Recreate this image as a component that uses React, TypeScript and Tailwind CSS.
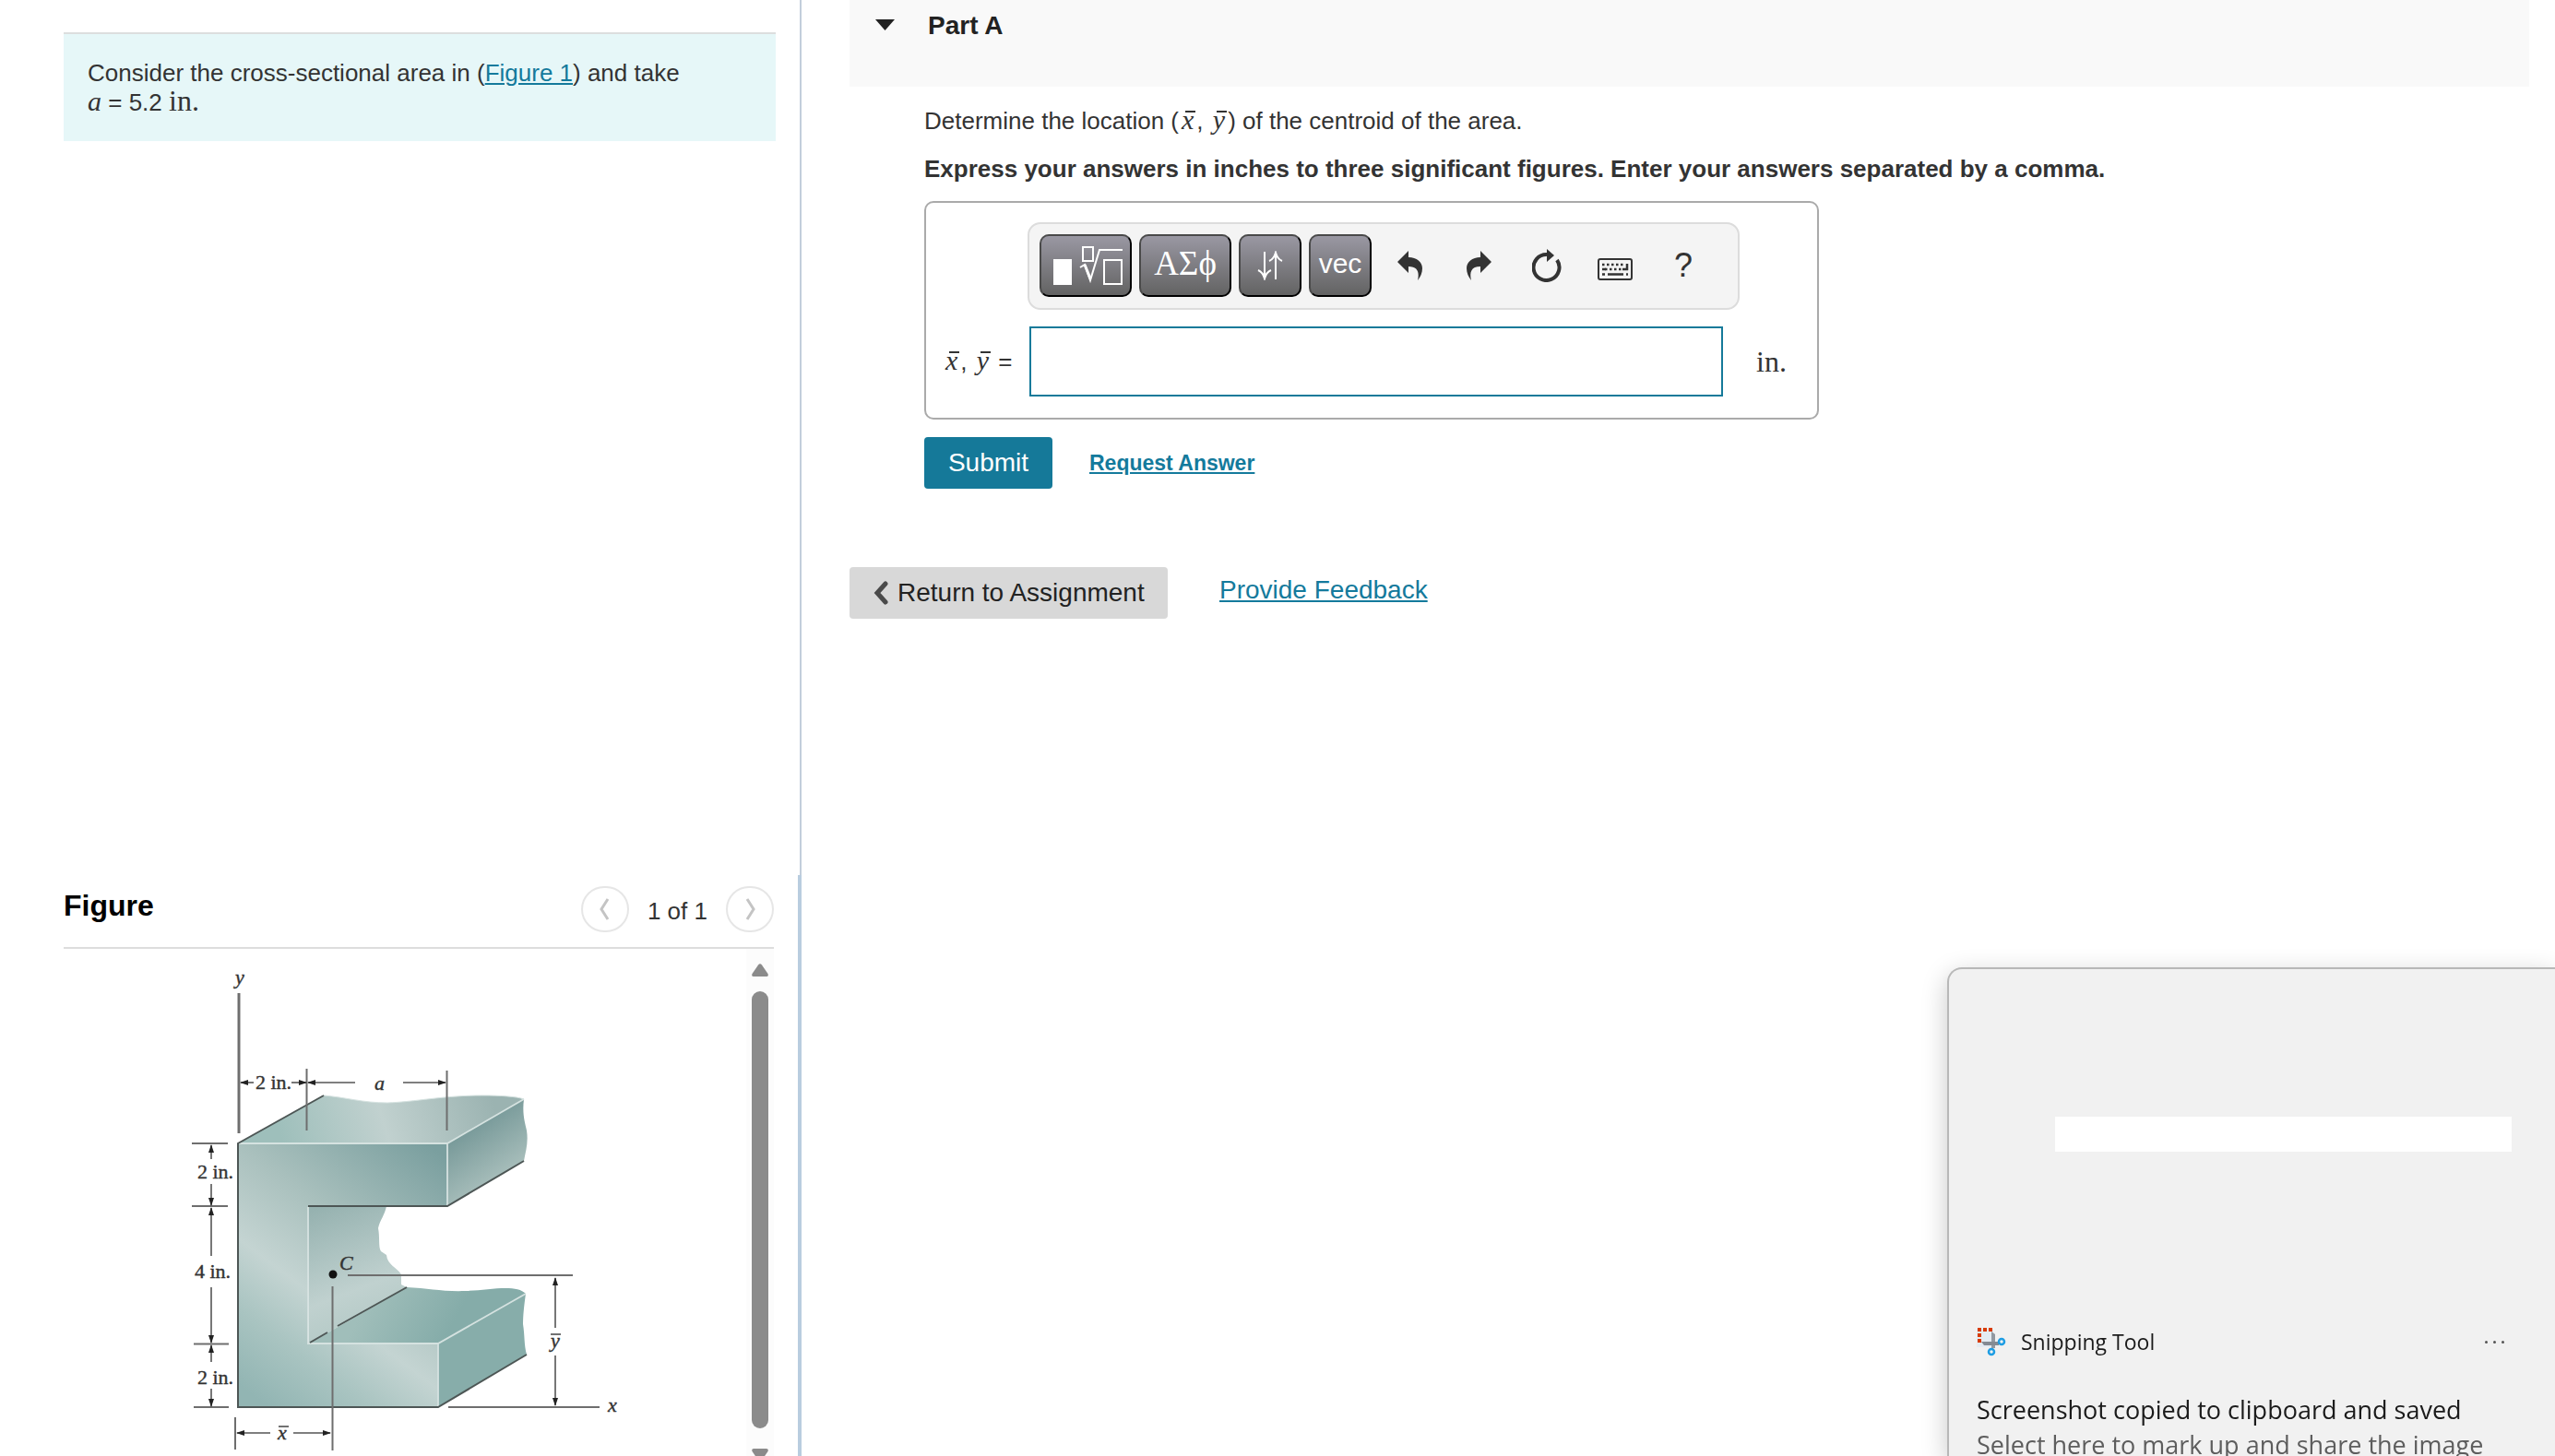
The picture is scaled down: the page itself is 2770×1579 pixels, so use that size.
import type { ReactNode } from 'react';

const sans = "font-['Liberation_Sans',Arial,sans-serif]";
const serif = "font-['Liberation_Serif','Times_New_Roman',serif]";

type MathProps = { children: ReactNode; bar?: boolean };

function MathVar({ children, bar }: MathProps) {
  return (
    <i className={`${serif} relative text-[30px] leading-5 ${bar ? 'px-[3px]' : ''}`}>
      {children}
      {bar && (
        <span
          aria-hidden="true"
          className="absolute left-[7px] top-[7px] h-[2px] w-[11px] bg-[#333]"
        />
      )}
    </i>
  );
}

type ArrowLineProps = {
  x1: number;
  y1: number;
  x2: number;
  y2: number;
};

// Dimension line with its arrow head on the second point
function ArrowLine(props: ArrowLineProps) {
  return (
    <line {...props} stroke="#555" strokeWidth="1.6" markerEnd="url(#head)" />
  );
}

function CrossSection() {
  return (
    <svg
      viewBox="0 -1 490 549"
      role="img"
      aria-label="C-shaped cross section with its centroid C"
      className="ml-[111px] h-[549px] w-[490px] shrink-0"
    >
      <defs>
        <marker
          id="head"
          markerUnits="userSpaceOnUse"
          markerWidth="9"
          markerHeight="8"
          refX="8"
          refY="4"
          orient="auto"
        >
          <path d="M0 1 L9 4 L0 7 Z" fill="#222" />
        </marker>
        <linearGradient id="front" gradientUnits="userSpaceOnUse" x1="290" y1="215" x2="90" y2="480">
          <stop offset="0" stopColor="#7a9f9f" />
          <stop offset="0.37" stopColor="#a9c0bd" />
          <stop offset="0.62" stopColor="#c4d4d2" />
          <stop offset="0.8" stopColor="#a9c4c1" />
          <stop offset="1" stopColor="#92b5b3" />
        </linearGradient>
        <linearGradient id="top" gradientUnits="userSpaceOnUse" x1="130" y1="220" x2="350" y2="150">
          <stop offset="0" stopColor="#9ebfbb" />
          <stop offset="0.48" stopColor="#c1d1cf" />
          <stop offset="1" stopColor="#9bb3b1" />
        </linearGradient>
        <linearGradient id="side" gradientUnits="userSpaceOnUse" x1="330" y1="185" x2="370" y2="245">
          <stop offset="0" stopColor="#739696" />
          <stop offset="1" stopColor="#a9bfbc" />
        </linearGradient>
        <linearGradient id="inner" gradientUnits="userSpaceOnUse" x1="165" y1="280" x2="215" y2="410">
          <stop offset="0" stopColor="#96b2b0" />
          <stop offset="0.7" stopColor="#c0d1cf" />
          <stop offset="1" stopColor="#b5cac7" />
        </linearGradient>
        <linearGradient id="shelf" gradientUnits="userSpaceOnUse" x1="220" y1="380" x2="300" y2="425">
          <stop offset="0" stopColor="#a0beba" />
          <stop offset="1" stopColor="#85aca9" />
        </linearGradient>
      </defs>

      <path d="M154 278 H239 C237 288 232 293 230 302 C232 312 230 322 233 327 L239 331 C240 342 250 344 255 352 L255 363 L261 366 L155 427 Z" fill="url(#inner)" />
      <path d="M78 210 L171 158 C195 160 213 166 240 166 C270 165 300 158 343 158 C362 158 380 159 388 162 L305 210 Z" fill="url(#top)" />
      <path d="M305 210 L388 162 C386 178 389 187 391 196 C393 209 390 218 388 229 L305 278 Z" fill="url(#side)" />
      <path d="M155 427 L261 366 C285 367 300 371 325 370 C350 369 380 362 390 373 L295 427 Z" fill="url(#shelf)" />
      <path d="M295 427 L390 373 C388 387 387 397 387 406 C389 418 388 428 391 439 L295 496 Z" fill="#87adaa" />
      <path d="M78 210 H305 V278 H154 V427 H295 V496 H78 Z" fill="url(#front)" />

      <g fill="none" stroke="#d5e2e0" strokeWidth="1.8">
        <path d="M79 210 H305 L388 162 M305 210 V277" />
        <path d="M154 279 V427 H295 L390 373 M295 427 V495" />
        <path d="M171 158 C195 160 213 166 240 166 C270 165 300 158 343 158 C362 158 380 159 388 162" strokeWidth="1" />
      </g>
      <g fill="none" stroke="#4d5655" strokeWidth="2">
        <path d="M171 158 L78 210 V496 H295 L391 439" />
        <path d="M154 278 H305 L388 229" />
        <path d="M156 426 L175 415 M186 408 L261 366" />
      </g>

      <g stroke="#6e6e6e" strokeWidth="2">
        <path d="M79 47 V199" strokeWidth="3" />
        <path d="M152.500 129 V196 M304.500 131 V196" />
        <path d="M28 210 H67 M28 278 H67 M30 427.500 H68 M30 496 H68" />
        <path d="M197 353 H441 M306 496 H470" />
        <path d="M180.500 365 V543 M75 507 V542" />
      </g>

      <ArrowLine x1={95} y1={144} x2={81} y2={144} />
      <ArrowLine x1={136} y1={144} x2={152} y2={144} />
      <ArrowLine x1={205} y1={144} x2={154} y2={144} />
      <ArrowLine x1={257} y1={144} x2={303} y2={144} />
      <ArrowLine x1={49} y1={227} x2={49} y2={212} />
      <ArrowLine x1={49} y1={254} x2={49} y2={277} />
      <ArrowLine x1={49} y1={332} x2={49} y2={280} />
      <ArrowLine x1={49} y1={366} x2={49} y2={426} />
      <ArrowLine x1={49} y1={447} x2={49} y2={429} />
      <ArrowLine x1={49} y1={476} x2={49} y2={495} />
      <ArrowLine x1={422} y1={410} x2={422} y2={356} />
      <ArrowLine x1={422} y1={440} x2={422} y2={494} />
      <ArrowLine x1={113} y1={524} x2={77} y2={524} />
      <ArrowLine x1={138} y1={524} x2={178} y2={524} />

      <circle cx="181" cy="352" r="4.500" fill="#111" />

      <g className={`${serif} text-[22px]`} fill="#333" stroke="#333" strokeWidth="0.400">
        <text x="97" y="151">2 in.</text>
        <text x="34" y="248">2 in.</text>
        <text x="31" y="356">4 in.</text>
        <text x="34" y="471">2 in.</text>
        <g fontStyle="italic">
          <text x="75" y="37">y</text>
          <text x="226" y="152">a</text>
          <text x="188" y="347">C</text>
          <text x="417" y="431">y</text>
          <text x="479" y="501">x</text>
          <text x="121" y="531">x</text>
        </g>
      </g>
      <path d="M417 417 H428 M122 517 H133" stroke="#444" strokeWidth="1.600" />
    </svg>
  );
}

function PageButton({ label, path }: { label: string; path: string }) {
  return (
    <button
      type="button"
      aria-label={label}
      className="flex h-[50px] w-[52px] items-center justify-center rounded-full border-2 border-[#e6e6e6] bg-white"
    >
      <svg viewBox="0 0 22 30" className="h-[30px] w-[22px]" fill="none" stroke="#c4c4c4" strokeWidth="3">
        <path d={path} />
      </svg>
    </button>
  );
}

function ProblemPanel() {
  return (
    <aside className="flex w-[869px] shrink-0 flex-col">
      <div className="min-h-0 flex-1 border-r-2 border-[#c2cedb] pl-[69px] pr-[26px] pt-[35px]">
        <div className="border-t-2 border-[#dcdede] bg-[#e6f7f8] p-[26px] text-[26px] leading-[32px] text-[#333]">
          <p>
            Consider the cross-sectional area in (
            <a href="#figure" className="text-[#147a9c] underline">
              Figure 1
            </a>
            ) and take
          </p>
          <p>
            <MathVar>a</MathVar> = 5.2 <span className={`${serif} text-[32px] leading-5`}>in.</span>
          </p>
        </div>
      </div>

      <section
        id="figure"
        className="flex h-[630px] shrink-0 flex-col overflow-hidden border-r-4 border-[#b9cddf] pl-[69px] pr-[26px]"
      >
        <div className="flex h-[80px] shrink-0 items-center justify-between border-b-2 border-[#ddd] pb-1">
          <h2 className="mb-2 text-[32px] font-bold leading-9 text-black">Figure</h2>
          <div className="flex items-center gap-5 text-[26px] text-[#333]">
            <PageButton label="Previous figure" path="M14 4 L7 15 L14 26" />
            <span className="pt-1">1 of 1</span>
            <PageButton label="Next figure" path="M8 4 L15 15 L8 26" />
          </div>
        </div>
        <div className="flex min-h-0 flex-1 justify-between">
          <CrossSection />
          <div className="flex w-[30px] shrink-0 flex-col items-center bg-[#fcfcfc] pt-4">
            <svg viewBox="0 0 18 14" className="h-[14px] w-[18px] shrink-0" aria-hidden="true">
              <path d="M7 1.500 Q9 -1 11 1.500 L17.500 11 Q18.500 14 16 14 H2 Q-0.500 14 0.500 11 Z" fill="#8b8b8b" />
            </svg>
            <div className="mt-4 h-[474px] w-[18px] shrink-0 rounded-full bg-[#8b8b8b]" />
            <svg viewBox="0 0 18 14" className="mt-[22px] h-[14px] w-[18px] shrink-0" aria-hidden="true">
              <path d="M7 12.500 Q9 15 11 12.500 L17.500 3 Q18.500 0 16 0 H2 Q-0.500 0 0.500 3 Z" fill="#8b8b8b" />
            </svg>
          </div>
        </div>
      </section>
    </aside>
  );
}

const darkButton =
  'flex h-[68px] items-center justify-center rounded-[10px] border-2 border-b-black border-l-[#4a4a4a] border-r-black border-t-[#4a4a4a] bg-linear-to-b from-[#9a98a3] to-[#636363] text-white';
const iconButton = 'flex h-[68px] w-[74px] items-center justify-center text-[#333]';

function Toolbar() {
  return (
    <div
      role="toolbar"
      aria-label="Equation editor"
      className="ml-[110px] flex w-[772px] gap-2 rounded-[14px] border-2 border-[#dcdcdc] bg-[#f4f4f4] px-[11px] pb-3 pt-[11px]"
    >
      <button type="button" aria-label="Templates" className={`${darkButton} w-[100px] pl-1`}>
        <svg viewBox="0 0 76 44" className="h-[44px] w-[76px]" fill="none" stroke="white" strokeWidth="2">
          <rect x="1" y="15" width="20" height="28" fill="white" stroke="none" />
          <rect x="33" y="2" width="11" height="15" />
          <path d="M30 24 L35 21 L41 38 L51 5 H76" />
          <path d="M35 21 L41 36" strokeWidth="3" />
          <rect x="56" y="16" width="19" height="26" />
        </svg>
      </button>
      <button type="button" className={`${darkButton} w-[100px] ${serif} pb-1 text-[37px]`}>
        ΑΣϕ
      </button>
      <button type="button" aria-label="Arrows" className={`${darkButton} w-[68px]`}>
        <svg viewBox="0 0 28 32" className="h-[32px] w-[28px]" fill="none" stroke="white" strokeWidth="2">
          <path d="M8 1 V28 M1 21 Q6 23 8 30 Q10 23 15 21" />
          <path d="M20 31 V4 M13 11 Q18 9 20 2 Q22 9 27 11" />
        </svg>
      </button>
      <button type="button" className={`${darkButton} w-[68px] pb-1 text-[30px]`}>
        vec
      </button>
      <div className="-ml-[3px] flex">
        <button type="button" aria-label="Undo" className={iconButton}>
          <svg viewBox="0 0 28 32" className="h-[32px] w-[28px]" fill="currentColor">
            <path d="M0 12 L12 0 V7 C21 7 27 12 27 19 C27 24 25 28 22 32 C24 23 22 17 12 17 V24 Z" />
          </svg>
        </button>
        <button type="button" aria-label="Redo" className={iconButton}>
          <svg viewBox="0 0 28 32" className="h-[32px] w-[28px]" fill="currentColor">
            <path d="M28 12 L16 0 V7 C7 7 1 12 1 19 C1 24 3 28 6 32 C4 23 6 17 16 17 V24 Z" />
          </svg>
        </button>
        <button type="button" aria-label="Reset" className={iconButton}>
          <svg viewBox="0 0 32 36" className="h-[36px] w-[32px]">
            <path d="M27 12 A14 14 0 1 1 16 6" fill="none" stroke="currentColor" strokeWidth="4" />
            <path d="M16 0 L24 7 L16 14 Z" fill="currentColor" />
          </svg>
        </button>
        <button type="button" aria-label="Keyboard shortcuts" className={`${iconButton} pt-2`}>
          <svg viewBox="0 0 38 24" className="h-[24px] w-[38px]" fill="none" stroke="currentColor">
            <rect x="1" y="1" width="36" height="22" rx="2" strokeWidth="2" />
            <path d="M5 7 H28 M8 12 H26" strokeWidth="2.500" strokeDasharray="2.500 2.500" />
            <path d="M5 12 H9 M27 12 H33 M32 6 V13" strokeWidth="2.500" />
            <path d="M5 17.500 H8 M11 17.500 H28 M31 17.500 H33" strokeWidth="2.500" />
          </svg>
        </button>
        <button type="button" aria-label="Help" className={`${iconButton} text-[36px]`}>
          ?
        </button>
      </div>
    </div>
  );
}

function AnswerBox() {
  return (
    <div className="mt-[19px] w-[970px] rounded-[10px] border-2 border-[#aaa] pb-[23px] pt-[21px]">
      <Toolbar />
      <div className="mt-[18px] flex items-center">
        <label htmlFor="answer" className="w-[112px] shrink-0 whitespace-nowrap pl-[18px] text-[26px] text-[#333]">
          <MathVar bar>x</MathVar>, <MathVar bar>y</MathVar> =
        </label>
        <input
          id="answer"
          type="text"
          className="h-[76px] w-[752px] border-2 border-[#157a9a] bg-white px-3 text-[28px] outline-none"
        />
        <span className={`${serif} ml-9 text-[32px] text-[#333]`}>in.</span>
      </div>
    </div>
  );
}

function AnswerPanel() {
  return (
    <main className="min-w-0 flex-1 pl-[52px] pr-7">
      <header className="flex items-start gap-9 bg-[#f9f9f9] pb-[50px] pl-7 pt-3">
        <button type="button" aria-label="Collapse Part A" className="pt-[9px]">
          <svg viewBox="0 0 21 12" className="h-[12px] w-[21px]">
            <path d="M0 0 H21 L10.500 12 Z" fill="#222" />
          </svg>
        </button>
        <h1 className="text-[28px] font-bold leading-[32px] text-[#222]">Part A</h1>
      </header>

      <div className="pl-[81px] pt-[21px] text-[26px] leading-[32px] text-[#333]">
        <p>
          Determine the location (<MathVar bar>x</MathVar>, <MathVar bar>y</MathVar>) of the centroid of the area.
        </p>
        <p className="mt-5 font-bold">
          Express your answers in inches to three significant figures. Enter your answers separated by a comma.
        </p>
        <AnswerBox />
        <div className="mt-[19px] flex items-center gap-10">
          <button type="button" className="h-[56px] w-[139px] rounded-[4px] bg-[#157999] text-[28px] text-white">
            Submit
          </button>
          <a href="#request" className="text-[23px] font-bold text-[#147a9c] underline">
            Request Answer
          </a>
        </div>
      </div>

      <div className="mt-[85px] flex items-center gap-14 text-[28px] leading-[32px]">
        <button
          type="button"
          className="flex h-[56px] w-[345px] items-center rounded-[4px] bg-[#d8d8d8] pl-[26px] text-[#222]"
        >
          <svg viewBox="0 0 18 26" className="mr-2 h-[26px] w-[18px]" fill="none" stroke="#4a4a4a" strokeWidth="5">
            <path d="M13 3 L4 13 L13 23" strokeLinecap="round" />
          </svg>
          Return to Assignment
        </button>
        <a href="#feedback" className="pb-[6px] text-[#147a9c] underline">
          Provide Feedback
        </a>
      </div>
    </main>
  );
}

function SnippingIcon() {
  return (
    <svg viewBox="0 0 32 32" className="h-[32px] w-[32px]" aria-hidden="true">
      <rect x="0" y="2" width="18" height="20" fill="#e4ebf2" />
      <g fill="#d83b01">
        <path d="M1 1 H5 V5 H1 Z M7 1 H11 V5 H7 Z M13 1 H17 V5 H13 Z" />
        <path d="M1 7 H5 V11 H1 Z M1 13 H5 V17 H1 Z" />
      </g>
      <path d="M16 5 L20 8 V23 H16 Z" fill="#9299a1" />
      <path d="M5 16 H24 V20 H8 Z" fill="#848b93" />
      <g fill="none" stroke="#1e9de3" strokeWidth="2.500">
        <circle cx="27" cy="16" r="3" />
        <circle cx="16" cy="27" r="3" />
      </g>
    </svg>
  );
}

function Toast() {
  return (
    <div
      role="status"
      className="fixed bottom-0 right-0 h-[530px] w-[659px] overflow-hidden rounded-tl-[16px] border-l-2 border-t-2 border-[#b8b8b8] bg-[#f1f1f1] pl-[30px] pr-[47px] font-['Open_Sans','Noto_Sans',sans-serif] text-[#1b1b1b] shadow-[0_8px_28px_rgba(0,0,0,0.22)]"
    >
      <div className="ml-[85px] mt-[160px] h-[38px] bg-white" />
      <div className="mt-[190px] flex items-center">
        <SnippingIcon />
        <span className="ml-4 text-[23px] leading-8">Snipping Tool</span>
        <button type="button" aria-label="More options" className="ml-auto flex gap-[6px] pr-2">
          <span className="size-[3px] rounded-full bg-[#555]" />
          <span className="size-[3px] rounded-full bg-[#555]" />
          <span className="size-[3px] rounded-full bg-[#555]" />
        </button>
      </div>
      <p className="mt-[39px] whitespace-nowrap text-[27px] leading-[38px]">
        Screenshot copied to clipboard and saved
      </p>
      <p className="whitespace-nowrap text-[27px] leading-[38px] text-[#5d5d5d]">
        Select here to mark up and share the image
      </p>
    </div>
  );
}

export default function App() {
  return (
    <div className={`${sans} flex h-screen overflow-hidden bg-white`}>
      <ProblemPanel />
      <AnswerPanel />
      <Toast />
    </div>
  );
}
